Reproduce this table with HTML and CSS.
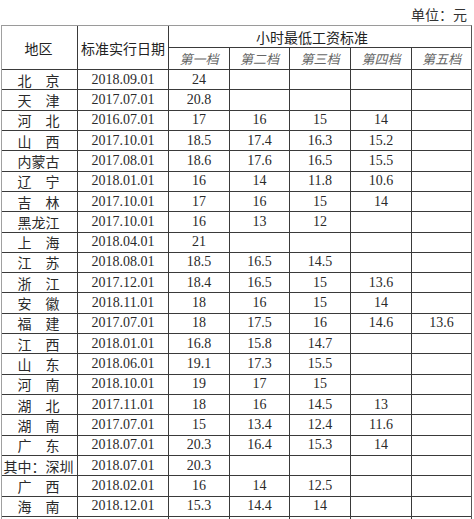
FILE: index.html
```html
<!DOCTYPE html>
<html lang="zh-CN">
<head>
<meta charset="utf-8">
<title>小时最低工资标准</title>
<link rel="stylesheet" href="styles.css">
</head>
<body>
<div class="unit">单位：元</div>
<div class="sheet">
  <div class="h area">地区</div>
  <div class="h date">标准实行日期</div>
  <div class="h group">小时最低工资标准</div>
  <div class="sub">第一档</div>
  <div class="sub">第二档</div>
  <div class="sub">第三档</div>
  <div class="sub">第四档</div>
  <div class="sub">第五档</div>

  <div class="r">北　京</div><div class="n">2018.09.01</div><div class="n">24</div><div class="n"></div><div class="n"></div><div class="n"></div><div class="n"></div>
  <div class="r">天　津</div><div class="n">2017.07.01</div><div class="n">20.8</div><div class="n"></div><div class="n"></div><div class="n"></div><div class="n"></div>
  <div class="r">河　北</div><div class="n">2016.07.01</div><div class="n">17</div><div class="n">16</div><div class="n">15</div><div class="n">14</div><div class="n"></div>
  <div class="r">山　西</div><div class="n">2017.10.01</div><div class="n">18.5</div><div class="n">17.4</div><div class="n">16.3</div><div class="n">15.2</div><div class="n"></div>
  <div class="r">内蒙古</div><div class="n">2017.08.01</div><div class="n">18.6</div><div class="n">17.6</div><div class="n">16.5</div><div class="n">15.5</div><div class="n"></div>
  <div class="r">辽　宁</div><div class="n">2018.01.01</div><div class="n">16</div><div class="n">14</div><div class="n">11.8</div><div class="n">10.6</div><div class="n"></div>
  <div class="r">吉　林</div><div class="n">2017.10.01</div><div class="n">17</div><div class="n">16</div><div class="n">15</div><div class="n">14</div><div class="n"></div>
  <div class="r">黑龙江</div><div class="n">2017.10.01</div><div class="n">16</div><div class="n">13</div><div class="n">12</div><div class="n"></div><div class="n"></div>
  <div class="r">上　海</div><div class="n">2018.04.01</div><div class="n">21</div><div class="n"></div><div class="n"></div><div class="n"></div><div class="n"></div>
  <div class="r">江　苏</div><div class="n">2018.08.01</div><div class="n">18.5</div><div class="n">16.5</div><div class="n">14.5</div><div class="n"></div><div class="n"></div>
  <div class="r">浙　江</div><div class="n">2017.12.01</div><div class="n">18.4</div><div class="n">16.5</div><div class="n">15</div><div class="n">13.6</div><div class="n"></div>
  <div class="r">安　徽</div><div class="n">2018.11.01</div><div class="n">18</div><div class="n">16</div><div class="n">15</div><div class="n">14</div><div class="n"></div>
  <div class="r">福　建</div><div class="n">2017.07.01</div><div class="n">18</div><div class="n">17.5</div><div class="n">16</div><div class="n">14.6</div><div class="n">13.6</div>
  <div class="r">江　西</div><div class="n">2018.01.01</div><div class="n">16.8</div><div class="n">15.8</div><div class="n">14.7</div><div class="n"></div><div class="n"></div>
  <div class="r">山　东</div><div class="n">2018.06.01</div><div class="n">19.1</div><div class="n">17.3</div><div class="n">15.5</div><div class="n"></div><div class="n"></div>
  <div class="r">河　南</div><div class="n">2018.10.01</div><div class="n">19</div><div class="n">17</div><div class="n">15</div><div class="n"></div><div class="n"></div>
  <div class="r">湖　北</div><div class="n">2017.11.01</div><div class="n">18</div><div class="n">16</div><div class="n">14.5</div><div class="n">13</div><div class="n"></div>
  <div class="r">湖　南</div><div class="n">2017.07.01</div><div class="n">15</div><div class="n">13.4</div><div class="n">12.4</div><div class="n">11.6</div><div class="n"></div>
  <div class="r">广　东</div><div class="n">2018.07.01</div><div class="n">20.3</div><div class="n">16.4</div><div class="n">15.3</div><div class="n">14</div><div class="n"></div>
  <div class="r">其中：深圳</div><div class="n">2018.07.01</div><div class="n">20.3</div><div class="n"></div><div class="n"></div><div class="n"></div><div class="n"></div>
  <div class="r">广　西</div><div class="n">2018.02.01</div><div class="n">16</div><div class="n">14</div><div class="n">12.5</div><div class="n"></div><div class="n"></div>
  <div class="r">海　南</div><div class="n">2018.12.01</div><div class="n">15.3</div><div class="n">14.4</div><div class="n">14</div><div class="n"></div><div class="n"></div>
  <div class="r"></div><div class="n"></div><div class="n"></div><div class="n"></div><div class="n"></div><div class="n"></div><div class="n"></div>
</div>
</body>
</html>
```

FILE: styles.css
```css
html, body {
  margin: 0;
  padding: 0;
  background: #fff;
  overflow: hidden;
}

body {
  width: 474px;
  height: 519px;
  font-family: "Liberation Serif", "Noto Sans CJK SC", serif;
  color: #2a2a2a;
}

.unit {
  height: 25px;
  box-sizing: border-box;
  padding: 5px 7px 0 0;
  text-align: right;
  font-family: "Noto Sans CJK SC", sans-serif;
  font-size: 14px;
  line-height: 18px;
  color: #333;
}

.sheet {
  margin-left: 1px;
  width: 471px;
  box-sizing: border-box;
  display: grid;
  grid-template-columns: 75px 90px 60px 59px 60px 60px 59px;
  grid-template-rows: 21px 21px repeat(23, 19.318px);
  gap: 1px;
  background: #3a3a3a;
  border-top: 1px solid #9a9a9a;
  border-left: 1px solid #a0a0a0;
  border-right: 1px solid #555;
}

.sheet > div {
  background: #fff;
  display: flex;
  align-items: center;
  justify-content: center;
  white-space: nowrap;
  overflow: hidden;
}

.h {
  font-family: "Noto Sans CJK SC", sans-serif;
  font-size: 14px;
  color: #222;
}

.area {
  grid-row: 1 / span 2;
  padding-right: 2px;
}

.date {
  grid-row: 1 / span 2;
}

.group {
  grid-column: 3 / span 5;
  padding-right: 16px;
}

.sub {
  font-family: "Noto Sans CJK SC", sans-serif;
  font-size: 13px;
  font-style: italic;
  color: #666;
}

.r {
  font-family: "Noto Sans CJK SC", sans-serif;
  font-size: 14px;
  color: #2a2a2a;
  padding-right: 2px;
}

.n {
  font-family: "Liberation Serif", serif;
  font-size: 14px;
  color: #2a2a2a;
}
```
